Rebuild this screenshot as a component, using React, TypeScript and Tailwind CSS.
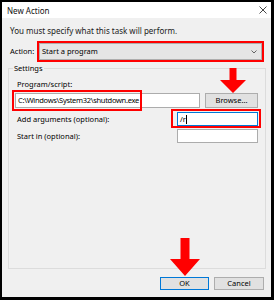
import React from 'react'

const font = { fontFamily: '"Noto Sans", "Open Sans", Arial, sans-serif' }

function DownArrow({ className, w, h, shaft, headTop }: { className: string; w: number; h: number; shaft: number; headTop: number }) {
  const cx = w / 2
  return (
    <svg className={className} width={w} height={h} viewBox={`0 0 ${w} ${h}`}>
      <path
        d={`M${cx - shaft / 2} 0 H${cx + shaft / 2} V${headTop} H${w} L${cx} ${h} L0 ${headTop} H${cx - shaft / 2} Z`}
        fill="#ff0000"
      />
    </svg>
  )
}

export default function App() {
  return (
    <div
      className="w-[274px] h-[300px] flex flex-col border-l-2 border-t-2 border-r-[3px] border-b-[3px] border-black text-[7.5px] leading-[11px] text-black"
      style={font}
    >
      {/* title bar */}
      <div className="h-[16px] bg-white flex items-center justify-between pl-[5px] pr-[4px]">
        <span className="text-[8px] text-[#111]">New Action</span>
        <svg width="8" height="8" viewBox="0 0 8 8">
          <path d="M0.5 0.5 L7.5 7.5 M7.5 0.5 L0.5 7.5" stroke="#333" strokeWidth="0.9" />
        </svg>
      </div>

      <div className="flex-1 bg-[#f0f0f0] relative flex flex-col">
        <p className="mt-[7px] pl-[8px] text-[8px] text-[#1a1a1a]">You must specify what this task will perform.</p>

        <div className="mt-[5px] flex items-center pl-[8px]">
          <span className="w-[27px]">Action:</span>
          <div className="w-[227px] h-[21px] border-2 border-[#ff0000]">
            <div className="h-full bg-[#e5e5e5] border border-[#adadad] flex items-center justify-between pl-[2px] pr-[4px]">
              <span>Start a program</span>
              <svg width="6" height="4" viewBox="0 0 6 4">
                <path d="M0.5 0.5 L3 3 L5.5 0.5" stroke="#555" strokeWidth="0.9" fill="none" />
              </svg>
            </div>
          </div>
        </div>

        {/* settings group */}
        <div className="relative mt-[6px] ml-[6px] w-[258px] h-[201px] border border-[#dcdcdc] flex flex-col pl-[6px]">
          <span className="absolute -top-[6px] left-[4px] bg-[#f0f0f0] px-[1px]">Settings</span>

          <span className="mt-[10px] pl-[2px]">Program/script:</span>
          <div className="mt-[3px] flex gap-[5px]">
            <div className="w-[185px] h-[15px] bg-white border border-[#acacac] flex items-center pl-[2px] tracking-[-0.3px]">
              C:\Windows\System32\shutdown.exe
            </div>
            <div className="w-[53px] h-[15px] bg-[#e1e1e1] border border-[#adadad] flex items-center justify-center">
              Browse...
            </div>
          </div>

          <div className="mt-[4px] flex items-center justify-between pr-[7px]">
            <span className="pl-[2px]">Add arguments (optional):</span>
            <div className="w-[81px] h-[14px] bg-white border border-[#0078d7] flex items-center pl-[2px]">
              /r<span className="ml-[0.5px] w-px h-[9px] bg-black" />
            </div>
          </div>

          <div className="mt-[3px] flex items-center justify-between pr-[7px]">
            <span className="pl-[2px]">Start in (optional):</span>
            <div className="w-[81px] h-[14px] bg-white border border-[#acacac]" />
          </div>
        </div>

        <div className="mt-[8px] flex justify-end gap-[5px] pr-[7px]">
          <div className="w-[49px] h-[13px] bg-[#e1e1e1] border border-[#0078d7] flex items-center justify-center">OK</div>
          <div className="w-[50px] h-[13px] bg-[#e1e1e1] border border-[#adadad] flex items-center justify-center">Cancel</div>
        </div>

        {/* highlight overlays */}
        <div className="absolute left-[10px] top-[72px] w-[130px] h-[21px] border-2 border-[#ff0000]" />
        <div className="absolute left-[169px] top-[91px] w-[90px] h-[19px] border-2 border-[#ff0000]" />
        <DownArrow className="absolute left-[218px] top-[50px]" w={26} h={25} shaft={7} headTop={12} />
        <DownArrow className="absolute left-[168px] top-[220px]" w={30} h={38} shaft={9} headTop={21} />
      </div>
    </div>
  )
}
